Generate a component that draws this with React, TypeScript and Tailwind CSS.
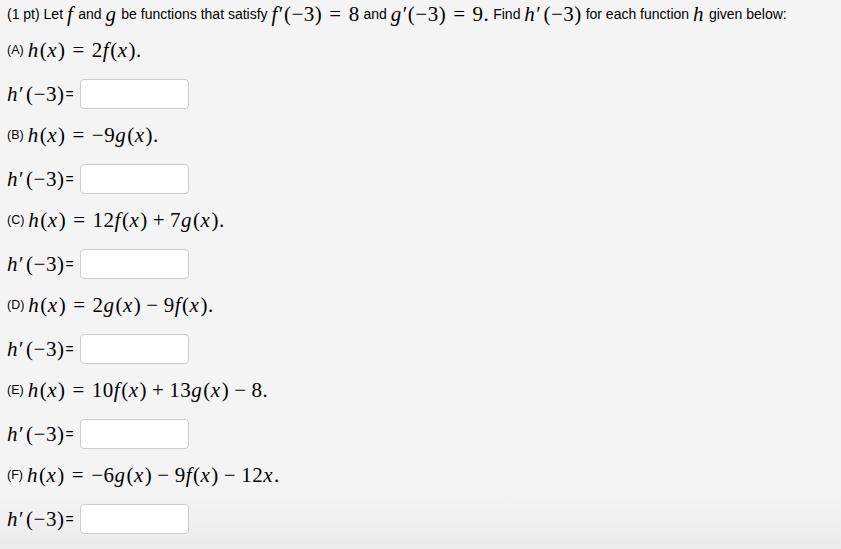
import React from "react";

const SERIF = "font-['Liberation_Serif',serif]";
const SANS = "font-['Liberation_Sans',Arial,sans-serif]";

function V({ children }: { children: React.ReactNode }) {
  return <span className="italic mr-[1px]">{children}</span>;
}

function Op({ children }: { children: React.ReactNode }) {
  return <span className="mx-[5px]">{children}</span>;
}

function Eq() {
  return <span className="mx-[7px]">=</span>;
}

function M({ children }: { children: React.ReactNode }) {
  return (
    <span className={`${SERIF} text-[21px] leading-none tracking-[0.5px] whitespace-nowrap`}>
      {children}
    </span>
  );
}

const fx = (
  <>
    <V>f</V>(<V>x</V>)
  </>
);
const gx = (
  <>
    <V>g</V>(<V>x</V>)
  </>
);

const hPrime = (
  <M>
    <V>h</V>′<span className="ml-[2px]">(−3)</span>
  </M>
);

const PARTS: { label: string; expr: React.ReactNode }[] = [
  { label: "(A)", expr: <>2{fx}.</> },
  { label: "(B)", expr: <>−9{gx}.</> },
  {
    label: "(C)",
    expr: (
      <>
        12{fx}
        <Op>+</Op>7{gx}.
      </>
    ),
  },
  {
    label: "(D)",
    expr: (
      <>
        2{gx}
        <Op>−</Op>9{fx}.
      </>
    ),
  },
  {
    label: "(E)",
    expr: (
      <>
        10{fx}
        <Op>+</Op>13{gx}
        <Op>−</Op>8.
      </>
    ),
  },
  {
    label: "(F)",
    expr: (
      <>
        −6{gx}
        <Op>−</Op>9{fx}
        <Op>−</Op>12<V>x</V>.
      </>
    ),
  },
];

export default function App() {
  return (
    <div
      className={`w-[841px] h-[549px] overflow-hidden bg-linear-to-b from-[#f4f4f4] from-90% to-[#ebebeb] text-black ${SANS} text-[14px] pl-[7px] pt-[3px]`}
    >
      <div className="h-[22px] flex items-center mb-[12px] whitespace-nowrap">
        <span>(1 pt) Let&nbsp;</span>
        <M>
          <V>f</V>
        </M>
        <span>&nbsp;and&nbsp;</span>
        <M>
          <V>g</V>
        </M>
        <span>&nbsp;be functions that satisfy&nbsp;</span>
        <M>
          <V>f</V>′(−3)
          <Eq />8
        </M>
        <span>&nbsp;and&nbsp;</span>
        <M>
          <V>g</V>′(−3)
          <Eq />9.
        </M>
        <span>&nbsp;Find&nbsp;</span>
        {hPrime}
        <span>&nbsp;for each function&nbsp;</span>
        <M>
          <V>h</V>
        </M>
        <span>&nbsp;given below:</span>
      </div>

      {PARTS.map((p) => (
        <div key={p.label} className="mb-[13px]">
          <div className="h-[26px] flex items-center">
            <span className="text-[12.5px] mr-[4px]">{p.label}</span>
            <M>
              <V>h</V>(<V>x</V>)
              <Eq />
              {p.expr}
            </M>
          </div>
          <div className="h-[30px] mt-[16px] flex items-center">
            {hPrime}
            <span className="ml-[1px] mr-[6px]">=</span>
            <div className="w-[109px] h-[30px] bg-white border border-[#cccccc] rounded-[4px]" />
          </div>
        </div>
      ))}
    </div>
  );
}
